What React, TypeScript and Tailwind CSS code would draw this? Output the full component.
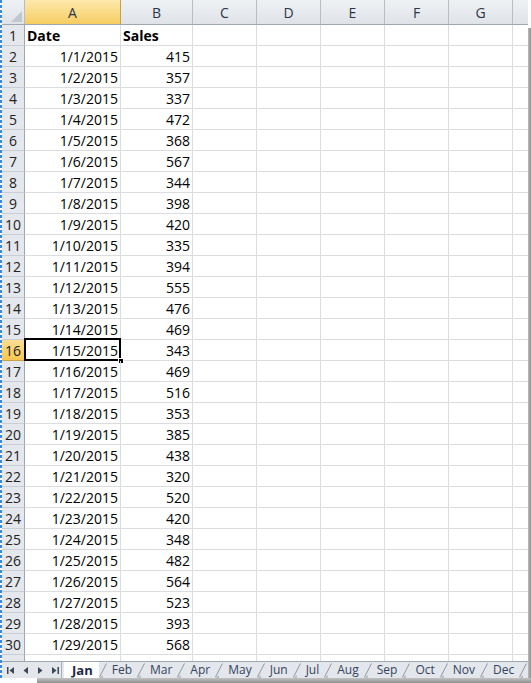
import React from 'react';

const DATA: [string, number][] = [
  ['1/1/2015', 415], ['1/2/2015', 357], ['1/3/2015', 337], ['1/4/2015', 472],
  ['1/5/2015', 368], ['1/6/2015', 567], ['1/7/2015', 344], ['1/8/2015', 398],
  ['1/9/2015', 420], ['1/10/2015', 335], ['1/11/2015', 394], ['1/12/2015', 555],
  ['1/13/2015', 476], ['1/14/2015', 469], ['1/15/2015', 343], ['1/16/2015', 469],
  ['1/17/2015', 516], ['1/18/2015', 353], ['1/19/2015', 385], ['1/20/2015', 438],
  ['1/21/2015', 320], ['1/22/2015', 520], ['1/23/2015', 420], ['1/24/2015', 348],
  ['1/25/2015', 482], ['1/26/2015', 564], ['1/27/2015', 523], ['1/28/2015', 393],
  ['1/29/2015', 568], ['1/30/2015', 540],
];

const EMPTY_COLS = ['C', 'D', 'E', 'F', 'G'];
const TABS = ['Feb', 'Mar', 'Apr', 'May', 'Jun', 'Jul', 'Aug', 'Sep', 'Oct', 'Nov', 'Dec'];
const ACTIVE_ROW = 16;

const cellFont = { fontFamily: '"Open Sans", "Liberation Sans", sans-serif' };

function Slant() {
  return (
    <svg width="8" height="16" viewBox="0 0 8 16" className="shrink-0">
      <line x1="0.5" y1="15" x2="7.5" y2="1.5" stroke="#8e97a4" strokeWidth="1" />
      <path d="M0 16 L4 16 L4 13 Z" fill="#b7bec8" />
    </svg>
  );
}

function NavArrows() {
  return (
    <div className="flex items-center w-[60px] h-full border-r border-[#a8b0bc] pl-[4px] gap-[6px]">
      <svg width="10" height="9" viewBox="0 0 10 9">
        <rect x="1" y="1" width="1.5" height="7" fill="#3b4656" />
        <path d="M8 1 L3.5 4.5 L8 8 Z" fill="#3b4656" />
      </svg>
      <svg width="8" height="9" viewBox="0 0 8 9">
        <path d="M6 1 L1.5 4.5 L6 8 Z" fill="#3b4656" />
      </svg>
      <svg width="8" height="9" viewBox="0 0 8 9">
        <path d="M2 1 L6.5 4.5 L2 8 Z" fill="#3b4656" />
      </svg>
      <svg width="10" height="9" viewBox="0 0 10 9">
        <path d="M2 1 L6.5 4.5 L2 8 Z" fill="#3b4656" />
        <rect x="7.5" y="1" width="1.5" height="7" fill="#3b4656" />
      </svg>
    </div>
  );
}

export default function App() {
  return (
    <div className="w-[531px] h-[683px] bg-white flex flex-col overflow-hidden" style={cellFont}>
      <div className="flex h-[678px]">
        {/* selection marquee on the left edge */}
        <div className="w-[2px] h-full bg-[repeating-linear-gradient(to_bottom,#3b8ad9_0px,#3b8ad9_3px,transparent_3px,transparent_5px)]" />

        <div className="w-[526px] flex flex-col">
          {/* grid */}
          <div className="h-[661px] overflow-hidden">
            {/* column headers */}
            <div className="flex h-[25px] border-b border-[#9ea6b2] bg-[linear-gradient(#eef1f4,#dfe3e8)]">
              <div className="w-[23px] shrink-0 border-r border-[#b6bdc7] flex items-end justify-end pr-[2px] pb-[2px]">
                <svg width="11" height="11" viewBox="0 0 11 11">
                  <path d="M11 0 L11 11 L0 11 Z" fill="#c1c7cf" />
                </svg>
              </div>
              <div className="w-[96px] shrink-0 border-r border-[#c8a04a] bg-[linear-gradient(#fde9ae,#f6cd60)] flex items-center justify-center text-[14px] text-[#2c3548]">
                A
              </div>
              <div className="w-[72px] shrink-0 border-r border-[#b6bdc7] flex items-center justify-center text-[14px] text-[#2c3548]">
                B
              </div>
              {EMPTY_COLS.map(c => (
                <div key={c} className="w-[64px] shrink-0 border-r border-[#b6bdc7] flex items-center justify-center text-[14px] text-[#2c3548]">
                  {c}
                </div>
              ))}
              <div className="flex-1" />
            </div>

            {/* header row 1 */}
            <div className="flex h-[21px]">
              <div className="w-[23px] shrink-0 border-r border-b border-r-[#9ea6b2] border-b-[#c9ced6] bg-[#e4e7ec] flex items-center justify-center text-[14px] text-[#222]">
                1
              </div>
              <div className="w-[96px] shrink-0 border-r border-b border-[#dadcdf] flex items-center pl-[2px] text-[14px] font-bold text-black">
                Date
              </div>
              <div className="w-[72px] shrink-0 border-r border-b border-[#dadcdf] flex items-center pl-[2px] text-[14px] font-bold text-black">
                Sales
              </div>
              {EMPTY_COLS.map(c => (
                <div key={c} className="w-[64px] shrink-0 border-r border-b border-[#dadcdf]" />
              ))}
              <div className="flex-1 border-b border-[#dadcdf]" />
            </div>

            {DATA.map(([date, sales], i) => {
              const row = i + 2;
              const active = row === ACTIVE_ROW;
              return (
                <div key={row} className="flex h-[21px]">
                  <div
                    className={`w-[23px] shrink-0 border-r border-b border-r-[#9ea6b2] flex items-center justify-center text-[14px] text-[#222] ${
                      active
                        ? 'bg-[linear-gradient(#fddf94,#f5c650)] border-b-[#c8a04a]'
                        : 'bg-[#e4e7ec] border-b-[#c9ced6]'
                    }`}
                  >
                    {row}
                  </div>
                  <div className="w-[96px] shrink-0 border-r border-b border-[#dadcdf] flex items-center justify-end pr-[2px] text-[14px] text-black relative">
                    {date}
                    {active && (
                      <>
                        <div className="absolute -left-[1px] -top-[2px] -right-[1px] -bottom-[1px] border-2 border-black" />
                        <div className="absolute -right-[4px] -bottom-[4px] w-[6px] h-[6px] bg-black border border-white" />
                      </>
                    )}
                  </div>
                  <div className="w-[72px] shrink-0 border-r border-b border-[#dadcdf] flex items-center justify-end pr-[2px] text-[14px] text-black">
                    {sales}
                  </div>
                  {EMPTY_COLS.map(c => (
                    <div key={c} className="w-[64px] shrink-0 border-r border-b border-[#dadcdf]" />
                  ))}
                  <div className="flex-1 border-b border-[#dadcdf]" />
                </div>
              );
            })}
          </div>

          {/* sheet tabs */}
          <div className="h-[17px] flex items-stretch border-t border-[#9ea6b2] bg-[#e3e6eb] overflow-hidden">
            <NavArrows />
            <div className="flex items-stretch pl-[2px]">
              <div className="flex items-center bg-white pl-[8px] pr-[6px] text-[13px] font-bold text-[#1d2b45] leading-none">
                Jan
              </div>
              {TABS.map(t => (
                <div key={t} className="flex items-stretch">
                  <Slant />
                  <span className="flex items-center px-[5px] text-[12px] text-[#34445f] leading-none">{t}</span>
                </div>
              ))}
              <Slant />
            </div>
          </div>
        </div>

        {/* right shadow */}
        <div className="w-[3px] flex flex-col">
          <div className="h-[28px] bg-white" />
          <div className="flex-1 bg-[linear-gradient(to_right,#b9b9b9,#8f8f8f)]" />
        </div>
      </div>

      {/* bottom shadow */}
      <div className="h-[5px] flex">
        <div className="w-[37px] bg-white" />
        <div className="flex-1 bg-[linear-gradient(to_bottom,#c2c2c2,#8f8f8f)]" />
      </div>
    </div>
  );
}
